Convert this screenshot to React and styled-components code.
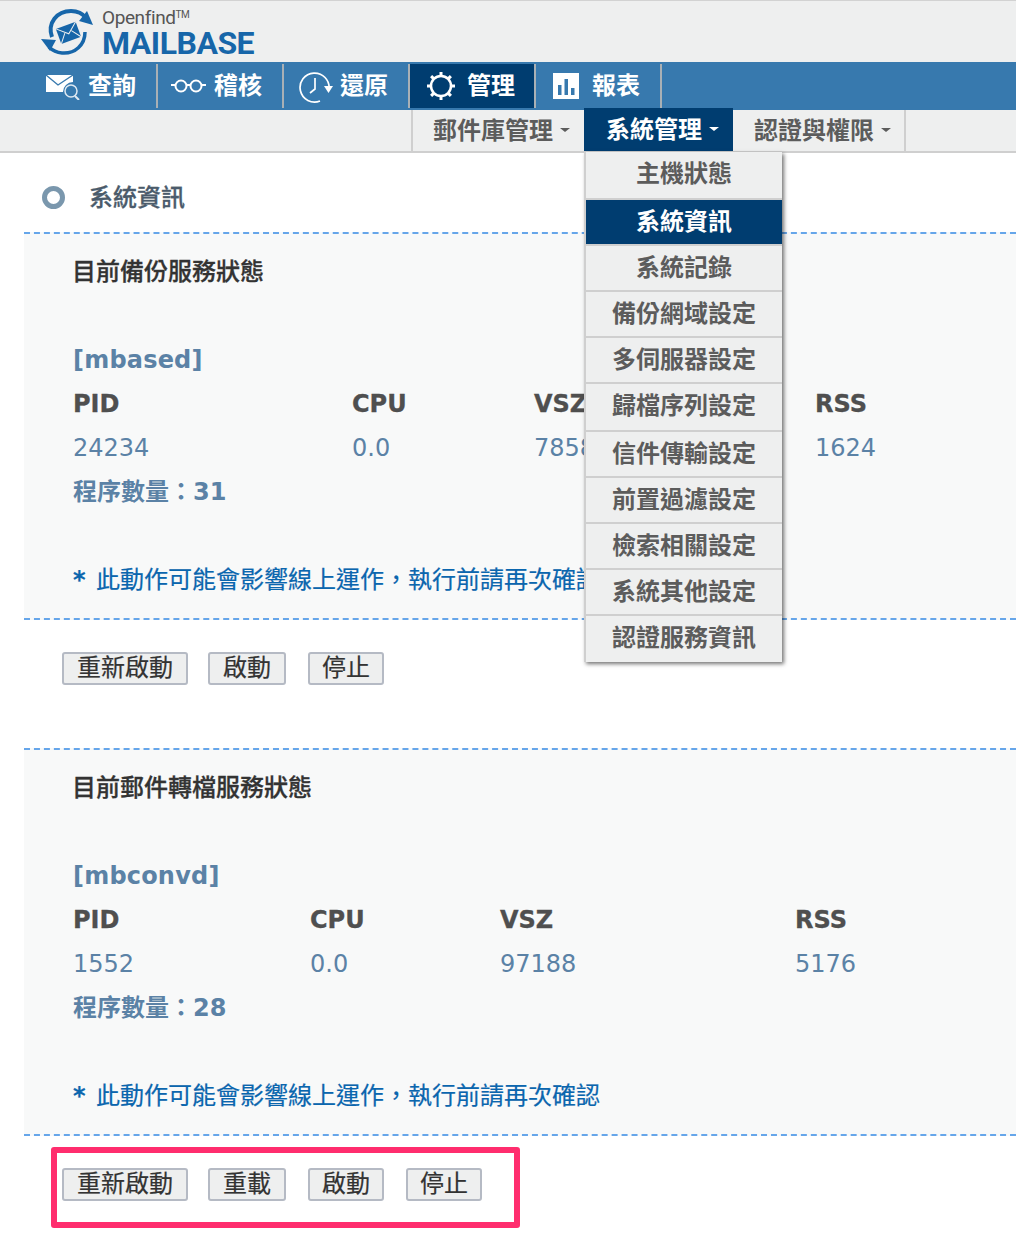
import React from 'react';
import styled, { createGlobalStyle } from 'styled-components';

const GlobalStyle = createGlobalStyle`
  html, body {
    margin: 0;
    padding: 0;
    background: #fff;
  }
  body {
    font-family: "DejaVu Sans", "Noto Sans CJK TC", sans-serif;
    font-size: 24px;
    overflow-x: hidden;
  }
`;

const Page = styled.div`
  width: 1016px;
  height: 1254px;
  overflow: hidden;
`;

const Brand = styled.header`
  height: 61px;
  background: #eeefef;
  border-top: 1px solid #d2d2d2;
  display: flex;
  align-items: flex-start;
  padding-left: 41px;
`;

const LogoWrap = styled.div`
  margin-top: 5px;
`;

const BrandText = styled.div`
  margin: 7px 0 0 6px;
  display: flex;
  flex-direction: column;
  font-family: Roboto, "Liberation Sans", sans-serif;
`;

const BrandTop = styled.span`
  font-size: 19px;
  line-height: 20px;
  color: #555;
  letter-spacing: -0.4px;
  sup {
    font-size: 10px;
    line-height: 0;
    vertical-align: 6px;
  }
`;

const BrandName = styled.span`
  margin-top: 1px;
  font-size: 32px;
  line-height: 28px;
  font-weight: 700;
  color: #1766a9;
  letter-spacing: -0.5px;
`;

const MainNav = styled.nav`
  height: 44px;
  padding: 2px 0 2px 33px;
  background: #3779ae;
  display: flex;
`;

const NavItem = styled.a`
  box-sizing: border-box;
  width: ${p => p.$width}px;
  padding-left: ${p => p.$pad}px;
  display: flex;
  align-items: center;
  gap: ${p => p.$gap}px;
  color: #fff;
  font-weight: 700;
  font-size: 24px;
  line-height: 44px;
  background: ${p => (p.$active ? '#003d70' : 'transparent')};
  border-right: 2px solid #a9b0b5;
`;

const SubNav = styled.nav`
  box-sizing: border-box;
  height: 43px;
  padding-left: 411px;
  background: #eeefef;
  border-bottom: 2px solid #cfcfcf;
  display: flex;
`;

const SubItem = styled.div`
  position: relative;
  box-sizing: border-box;
  height: ${p => (p.$active ? 43 : 41)}px;
  margin-top: ${p => (p.$active ? -2 : 0)}px;
  width: ${p => p.$width}px;
  padding-left: ${p => p.$pad}px;
  padding-bottom: 4px;
  display: flex;
  align-items: center;
  font-weight: 700;
  color: ${p => (p.$active ? '#fff' : '#5c5c5c')};
  background: ${p => (p.$active ? '#003d70' : 'transparent')};
  border-left: ${p => (p.$first ? '2px solid #cfcfcf' : 'none')};
  border-right: ${p => (p.$last ? '2px solid #cfcfcf' : 'none')};
`;

const Caret = styled.span`
  margin-left: 7px;
  margin-top: 3px;
  width: 0;
  height: 0;
  border-left: 5px solid transparent;
  border-right: 5px solid transparent;
  border-top: 4px solid currentColor;
`;

const Dropdown = styled.ul`
  position: absolute;
  z-index: 5;
  top: 44px;
  left: 0;
  width: 196px;
  margin: 0;
  padding: 0;
  list-style: none;
  background: #eeefef;
  border-left: 2px solid #cfcfcf;
  box-shadow: 2px 2px 4px rgba(0, 0, 0, 0.55);
`;

const DropdownItem = styled.li`
  box-sizing: border-box;
  height: ${p => p.$height || 46}px;
  padding-bottom: ${p => (p.$height ? 8 : 6)}px;
  display: flex;
  align-items: center;
  justify-content: center;
  font-weight: 700;
  color: ${p => (p.$active ? '#fff' : '#5c5c5c')};
  background: ${p => (p.$active ? '#003d70' : '#eeefef')};
  border-bottom: 2px solid #cfcfcf;
  &:last-child {
    padding-bottom: 8px;
    border-bottom: none;
  }
`;

const PageTitle = styled.div`
  height: 79px;
  padding: 5px 0 0 42px;
  display: flex;
  align-items: center;
  gap: 24px;
  font-size: 24px;
  font-weight: 500;
  color: #4b5b6b;
  -webkit-text-stroke: 0.3px #4b5b6b;
  box-sizing: border-box;
`;

const Ring = styled.span`
  box-sizing: border-box;
  width: 23px;
  height: 23px;
  margin-top: 4px;
  border-radius: 50%;
  border: 5px solid #7a97ad;
  filter: blur(0.5px);
`;

const Panel = styled.section`
  margin-left: 24px;
  padding: 16px 0 16px 49px;
  background: #f8f9f9;
  border-top: 2px dashed #66a6ea;
  border-bottom: 2px dashed #66a6ea;
`;

const Line = styled.div`
  height: 44px;
  line-height: 44px;
  white-space: nowrap;
  margin-top: ${p => p.$top || 0}px;
`;

const PanelTitle = styled(Line)`
  font-weight: 500;
  color: #333;
  margin-left: -1px;
  -webkit-text-stroke: 0.3px #333;
`;

const ServiceName = styled(Line)`
  font-weight: 700;
  color: #5b82a6;
  letter-spacing: 0.2px;
`;

const StatGrid = styled.div`
  display: grid;
  grid-template-columns: ${p => p.$cols};
`;

const StatHead = styled(Line)`
  font-weight: 700;
  color: #4f4f4f;
  -webkit-text-stroke: 0.3px #4f4f4f;
`;

const StatValue = styled(Line)`
  color: #5b82a6;
`;

const Count = styled(Line)`
  font-weight: 700;
  color: #5b82a6;
`;

const Warning = styled(Line)`
  color: #0b66ae;
  -webkit-text-stroke: 0.2px #0b66ae;
`;

const Star = styled.span`
  display: inline-block;
  width: 23px;
  font-weight: 700;
`;

const Actions = styled.div`
  margin-left: ${p => p.$left}px;
  padding-top: ${p => p.$top}px;
  padding-bottom: ${p => p.$bottom}px;
  display: flex;
  gap: 22px;
`;

const Highlight = styled.div`
  box-sizing: border-box;
  width: 469px;
  height: 81px;
  margin: 11px 0 0 51px;
  border: 6px solid #ff2d6e;
  border-radius: 3px;
`;

const ActionButton = styled.button`
  box-sizing: border-box;
  height: 33px;
  padding: 0 ${p => p.$pad || 12}px 2px;
  font-family: inherit;
  font-size: 24px;
  line-height: 28px;
  color: #333;
  background: #eeefef;
  border: 2px solid #b5bac4;
  border-radius: 3px;
  white-space: nowrap;
  -webkit-text-stroke: 0.2px #333;
  &:first-child {
    margin-right: -2px;
  }
`;

const MailSearchIcon = () => (
  <svg width="35" height="28" viewBox="0 0 35 28">
    <path d="M1 3h27v7a10 10 0 0 0-10 10H1z" fill="#fff" />
    <path d="M1 3l12 10 15-10" fill="none" stroke="#3779ae" strokeWidth="1.4" />
    <circle cx="26" cy="19" r="6" fill="none" stroke="#dfe9f2" strokeWidth="1.5" />
    <path d="M30 24l4 4" stroke="#dfe9f2" strokeWidth="2" />
  </svg>
);

const GlassesIcon = () => (
  <svg width="35" height="16" viewBox="0 0 35 16">
    <circle cx="10" cy="8" r="5.5" fill="none" stroke="#fff" strokeWidth="2" />
    <circle cx="25" cy="8" r="5.5" fill="none" stroke="#fff" strokeWidth="2" />
    <path d="M0 7l4.500 0M15.500 7h4M30.500 7h4.500" stroke="#fff" strokeWidth="1.800" />
  </svg>
);

const ClockIcon = () => (
  <svg width="35" height="34" viewBox="0 0 35 34">
    <path d="M30 20a14.500 14.500 0 1 0-9 12" fill="none" stroke="#fff" strokeWidth="1.700" />
    <path d="M16 9v11l-5 4" fill="none" stroke="#fff" strokeWidth="1.700" />
    <path d="M25 17h9l-4.500 7z" fill="#fff" />
  </svg>
);

const GearIcon = () => (
  <svg width="30" height="30" viewBox="0 0 30 30">
    <circle cx="15" cy="15" r="10" fill="none" stroke="#fff" strokeWidth="2.500" />
    <g fill="#fff">
      {[0, 45, 90, 135, 180, 225, 270, 315].map(a => (
        <rect key={a} x="13.500" y="1" width="3" height="4" transform={`rotate(${a} 15 15)`} />
      ))}
    </g>
  </svg>
);

const BarsIcon = () => (
  <svg width="26" height="26" viewBox="0 0 26 26">
    <rect width="26" height="26" fill="#fff" />
    <rect x="5" y="12" width="3.500" height="10" fill="#3779ae" />
    <rect x="11.500" y="6" width="3.500" height="16" fill="#3779ae" />
    <rect x="18" y="15" width="3.500" height="7" fill="#3779ae" />
  </svg>
);

const LogoMark = () => (
  <svg width="55" height="52" viewBox="0 0 55 52">
    <path d="M11 31C6 17 16 5 30 5c7 0 12 3 15 7" fill="none" stroke="#1766a9" strokeWidth="4" />
    <path d="M52 19L38 15l8-10z" fill="#1766a9" />
    <path d="M44 26c0 13-10 22-23 21-6-.5-10-3-13-6" fill="none" stroke="#1766a9" strokeWidth="3.500" />
    <path d="M0 33l15 1-6 11z" fill="#1766a9" />
    <g transform="rotate(-20 27 27)">
      <rect x="17" y="19" width="21" height="16" fill="#1766a9" />
      <path d="M17 19l10.500 9 10.500-9M17 35l7-9M38 35l-7-9" fill="none" stroke="#eeefef" strokeWidth="1" />
    </g>
  </svg>
);

const navItems = [
  { label: '查詢', icon: <MailSearchIcon />, width: 125, pad: 12, gap: 8 },
  { label: '稽核', icon: <GlassesIcon />, width: 126, pad: 13, gap: 8 },
  { label: '還原', icon: <ClockIcon />, width: 126, pad: 15, gap: 6 },
  { label: '管理', icon: <GearIcon />, width: 126, pad: 16, gap: 11, active: true },
  { label: '報表', icon: <BarsIcon />, width: 126, pad: 17, gap: 13 },
];

const menuItems = [
  { label: '主機狀態', height: 48 },
  { label: '系統資訊', active: true },
  { label: '系統記錄' },
  { label: '備份網域設定' },
  { label: '多伺服器設定' },
  { label: '歸檔序列設定', height: 48 },
  { label: '信件傳輸設定' },
  { label: '前置過濾設定' },
  { label: '檢索相關設定' },
  { label: '系統其他設定' },
  { label: '認證服務資訊' },
];

function ServicePanel({ title, name, cols, stats, count }) {
  return (
    <Panel>
      <PanelTitle>{title}</PanelTitle>
      <ServiceName $top={44}>{name}</ServiceName>
      <StatGrid $cols={cols}>
        {['PID', 'CPU', 'VSZ', 'RSS'].map(h => <StatHead key={h}>{h}</StatHead>)}
        {stats.map(v => <StatValue key={v}>{v}</StatValue>)}
      </StatGrid>
      <Count>程序數量：{count}</Count>
      <Warning $top={44}><Star>*</Star>此動作可能會影響線上運作，執行前請再次確認</Warning>
    </Panel>
  );
}

export default function App() {
  return (
    <Page>
      <GlobalStyle />
      <Brand>
        <LogoWrap><LogoMark /></LogoWrap>
        <BrandText>
          <BrandTop>Openfind<sup>TM</sup></BrandTop>
          <BrandName>MAILBASE</BrandName>
        </BrandText>
      </Brand>
      <MainNav>
        {navItems.map(item => (
          <NavItem key={item.label} $width={item.width} $pad={item.pad} $gap={item.gap} $active={item.active}>
            {item.icon}
            {item.label}
          </NavItem>
        ))}
      </MainNav>
      <SubNav>
        <SubItem $first $width={173} $pad={20}>郵件庫管理<Caret /></SubItem>
        <SubItem $active $width={149} $pad={22}>
          系統管理<Caret />
          <Dropdown>
            {menuItems.map(m => (
              <DropdownItem key={m.label} $active={m.active} $height={m.height}>{m.label}</DropdownItem>
            ))}
          </Dropdown>
        </SubItem>
        <SubItem $last $width={173} $pad={21}>認證與權限<Caret /></SubItem>
      </SubNav>
      <PageTitle><Ring />系統資訊</PageTitle>

      <ServicePanel
        title="目前備份服務狀態"
        name="[mbased]"
        cols="279px 182px 281px 1fr"
        stats={['24234', '0.0', '7858', '1624']}
        count="31"
      />
      <Actions $left={62} $top={32} $bottom={63}>
        <ActionButton $pad={13}>重新啟動</ActionButton>
        <ActionButton $pad={13}>啟動</ActionButton>
        <ActionButton>停止</ActionButton>
      </Actions>

      <ServicePanel
        title="目前郵件轉檔服務狀態"
        name="[mbconvd]"
        cols="237px 190px 295px 1fr"
        stats={['1552', '0.0', '97188', '5176']}
        count="28"
      />
      <Highlight>
        <Actions $left={5} $top={15} $bottom={0}>
          <ActionButton $pad={13}>重新啟動</ActionButton>
          <ActionButton $pad={13}>重載</ActionButton>
          <ActionButton>啟動</ActionButton>
          <ActionButton>停止</ActionButton>
        </Actions>
      </Highlight>
    </Page>
  );
}
